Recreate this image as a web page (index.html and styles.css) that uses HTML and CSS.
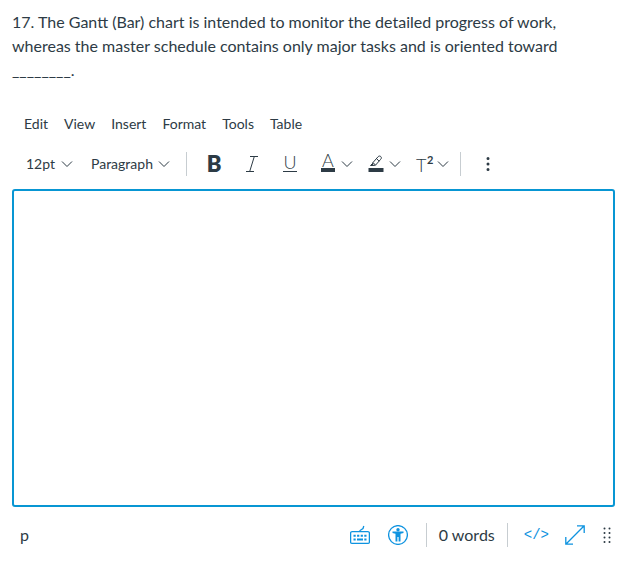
FILE: index.html
```
<!DOCTYPE html>
<html lang="en">
<head>
<meta charset="utf-8">
<title>Question 17</title>
<link rel="stylesheet" href="styles.css">
</head>
<body>
<main class="question">
  <div class="prompt" id="prompt">
    <p>17. The Gantt (Bar) chart is intended to monitor the detailed progress of work, whereas the master schedule contains only major tasks and is oriented toward ________.</p>
  </div>

  <section class="editor" aria-label="Rich content editor">
    <nav class="menubar" aria-label="Editor menu">
      <button type="button">Edit</button>
      <button type="button">View</button>
      <button type="button">Insert</button>
      <button type="button">Format</button>
      <button type="button">Tools</button>
      <button type="button">Table</button>
    </nav>

    <div class="toolbar" role="toolbar" aria-label="Formatting">
      <div class="group selects">
        <div class="picker">
          <select aria-label="Font size"><option>12pt</option></select>
          <svg class="chevron" viewBox="0 0 12 8" aria-hidden="true"><path d="M1 1.5l5 5 5-5"/></svg>
        </div>
        <div class="picker">
          <select aria-label="Block format"><option>Paragraph</option></select>
          <svg class="chevron" viewBox="0 0 12 8" aria-hidden="true"><path d="M1 1.5l5 5 5-5"/></svg>
        </div>
      </div>
      <div class="group styles">
        <button type="button" class="tool" aria-label="Bold"><svg class="glyph" viewBox="0 0 20 20"><text class="bold" x="10" y="18" text-anchor="middle">B</text></svg></button>
        <button type="button" class="tool" aria-label="Italic"><svg class="glyph" viewBox="0 0 20 20"><path class="slant" d="M8 2.500h8M4 17.500h8M12.300 2.500L7.700 17.500"/></svg></button>
        <button type="button" class="tool" aria-label="Underline"><svg class="glyph" viewBox="0 0 20 20"><text class="thin" x="10" y="15" text-anchor="middle">U</text><path d="M3 17.500h14"/></svg></button>
        <button type="button" class="tool split" aria-label="Text color"><svg class="glyph" viewBox="0 0 20 20"><text class="thin" x="10" y="13" text-anchor="middle">A</text><path class="swatch" d="M3 14h14v4H3z"/></svg><svg class="chevron" viewBox="0 0 12 8"><path d="M1 1.5l5 5 5-5"/></svg></button>
        <button type="button" class="tool split" aria-label="Highlight color"><svg class="glyph" viewBox="0 0 20 20"><path d="M7 8.500L12 2.800c1-1 2-1 2.800-.2s.8 1.800-.2 2.800L9.500 11.200l-3 .3zM7 8.500l2.500 2.700M10.500 4.500l2.600 2.700M6.500 11.500H4.500l2-2z"/><path class="swatch" d="M2.500 14h15v4h-15z"/></svg><svg class="chevron" viewBox="0 0 12 8"><path d="M1 1.5l5 5 5-5"/></svg></button>
        <button type="button" class="tool split" aria-label="Superscript"><svg class="glyph" viewBox="0 0 20 20"><text class="thin" x="2" y="18">T</text><text class="sup" x="13" y="10">2</text></svg><svg class="chevron" viewBox="0 0 12 8"><path d="M1 1.5l5 5 5-5"/></svg></button>
      </div>
      <div class="group">
        <button type="button" class="tool" aria-label="More"><svg class="glyph" viewBox="0 0 20 20"><path class="dots" d="M10 4.500h.01M10 10h.01M10 15.500h.01"/></svg></button>
      </div>
    </div>

    <textarea class="canvas" aria-labelledby="prompt"></textarea>

    <footer class="status">
      <span class="path">p</span>
      <button type="button" class="action" aria-label="Keyboard shortcuts"><svg class="icon" viewBox="0 0 20 20"><rect x=".6" y="6.600" width="18.800" height="11.800" rx="1.500"/><path d="M10 6.500V5.500l3-2 .8-2.500"/><path class="keys" d="M3.500 10.800H16.500" stroke-dasharray="2.200 1.400"/><path class="keys" d="M3.500 14.500h2.200M7 14.500h6M14.300 14.500h2.200"/></svg></button>
      <button type="button" class="action" aria-label="Accessibility checker"><svg class="icon" viewBox="0 0 20 20"><circle cx="10" cy="10" r="9.400"/><circle class="solid" cx="10" cy="4.700" r="1.700"/><path class="solid" d="M4.500 6.600h11v1.500l-3 .6V16.500h-1.900V12H9.400v4.500H7.500V8.700l-3-.6z"/></svg></button>
      <span class="words">0 words</span>
      <button type="button" class="action code" aria-label="Switch to HTML editor">&lt;/&gt;</button>
      <button type="button" class="action expand" aria-label="Fullscreen"><svg class="icon" viewBox="0 0 20 20"><path d="M.8 19.200L19.200.8M12 .8h7.200V8M.8 12v7.200H8"/></svg></button>
      <button type="button" class="grip" aria-label="Resize editor"><svg viewBox="0 0 8 18"><path class="dots" d="M1.500 2.500h.01M6.500 2.500h.01M1.500 7h.01M6.500 7h.01M1.500 11.500h.01M6.500 11.500h.01M1.500 16h.01M6.500 16h.01"/></svg></button>
    </footer>
  </section>
</main>
</body>
</html>
```
FILE: styles.css
```
:root {
  --ink: #2d3b45;
  --blue: #0896d3;
  --action: #0e93e0;
  --line: #c7cdd1;
}

* {
  box-sizing: border-box;
}

body {
  margin: 0;
  background: #fff;
  color: var(--ink);
  font: 16px/24px Lato, sans-serif;
}

.question {
  padding: 10px 11px 10px 12px;
}

.prompt p {
  margin: 0;
}

button,
select {
  margin: 0;
  padding: 0;
  border: 0;
  background: none;
  color: inherit;
  font: inherit;
}

svg {
  display: block;
  fill: none;
  stroke: currentColor;
}

.editor {
  margin-top: 28px;
}

.menubar {
  display: flex;
  gap: 16px;
  padding: 4px 12px;
  font-size: 14px;
  line-height: 20px;
}

.toolbar {
  display: flex;
  align-items: center;
  height: 51px;
  font-size: 14px;
}

.group {
  display: flex;
  align-items: center;
  height: 24px;
}

.group + .group {
  border-left: 1px solid var(--line);
}

.selects {
  gap: 18px;
  padding: 0 16px 0 14px;
}

.picker {
  display: grid;
  align-items: center;
}

.picker > * {
  grid-area: 1 / 1;
}

.picker select {
  appearance: none;
  padding-right: 17px;
  line-height: 20px;
}

.picker .chevron {
  justify-self: end;
  pointer-events: none;
}

.chevron {
  width: 12px;
  height: 8px;
}

.styles {
  gap: 18px;
  padding: 0 11px 0 17px;
}

.tool {
  display: flex;
  align-items: center;
}

.split {
  gap: 3px;
}

.split + .split {
  margin-left: -5px;
}

.glyph {
  width: 20px;
  height: 20px;
  overflow: visible;
}

.glyph text {
  fill: currentColor;
  stroke: none;
  font-family: Lato, sans-serif;
}

.glyph .bold {
  font-size: 22px;
  font-weight: 800;
}

.glyph .thin {
  font-size: 18px;
  font-weight: 300;
}

.glyph .sup {
  font-size: 11px;
  font-weight: 700;
}

.swatch,
.solid {
  fill: currentColor;
  stroke: none;
}

.dots {
  stroke-width: 3;
  stroke-linecap: round;
}

.group:last-child {
  padding-left: 17px;
}

.canvas {
  display: block;
  width: 100%;
  height: 318px;
  padding: 12px;
  border: 2px solid var(--blue);
  border-radius: 3px;
  outline: 0;
  background: #fff;
  color: inherit;
  font: inherit;
  resize: none;
}

.status {
  display: flex;
  align-items: center;
  padding: 16px 4px 0 8px;
}

.path {
  margin-right: auto;
}

.action {
  margin-right: 18px;
  color: var(--action);
}

.icon {
  width: 20px;
  height: 20px;
  stroke-width: 1.3;
}

.keys {
  stroke-width: 2;
}

.words {
  margin-right: 16px;
  padding: 0 12px;
  border: solid var(--line);
  border-width: 0 1px;
}

.code {
  margin-right: 16px;
  font: 14px/20px "Liberation Mono", monospace;
}

.grip svg {
  width: 8px;
  height: 18px;
}

.grip .dots {
  stroke-width: 2;
}
```
